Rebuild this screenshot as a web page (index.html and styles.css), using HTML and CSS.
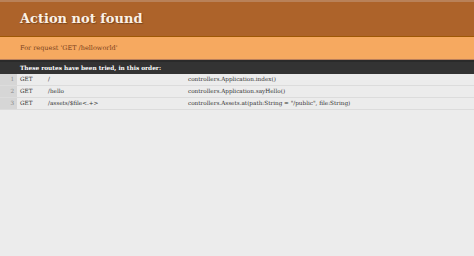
FILE: index.html
```html
<!DOCTYPE html>
<html lang="en">
<head>
    <meta charset="UTF-8">
    <title>Action not found</title>
    <link rel="stylesheet" href="styles.css">
</head>
<body>
    <h1>Action not found</h1>
    <p class="detail">For request 'GET /helloworld'</p>
    <h2>These routes have been tried, in this order:</h2>
    <div class="routes">
        <div class="route">
            <span class="line">1</span>
            <span class="verb">GET</span>
            <span class="path">/</span>
            <span class="call">controllers.Application.index()</span>
        </div>
        <div class="route">
            <span class="line">2</span>
            <span class="verb">GET</span>
            <span class="path">/hello</span>
            <span class="call">controllers.Application.sayHello()</span>
        </div>
        <div class="route">
            <span class="line">3</span>
            <span class="verb">GET</span>
            <span class="path">/assets/$file&lt;.+&gt;</span>
            <span class="call">controllers.Assets.at(path:String = "/public", file:String)</span>
        </div>
    </div>
</body>
</html>
```

FILE: styles.css
```css
html, body {
    margin: 0;
    padding: 0;
    background: #ececec;
    font-family: "DejaVu Serif", serif;
}
h1 {
    margin: 0;
    height: 34px;
    line-height: 34px;
    padding: 0 20px;
    background: #ad632a;
    border-top: 2px solid #b98158;
    border-bottom: 1px solid #9f5805;
    color: #fbf1e6;
    font-size: 13px;
    text-shadow: 1px 1px 1px rgba(0, 0, 0, 0.3);
}
.detail {
    margin: 0;
    height: 22px;
    line-height: 22px;
    padding: 0 20px;
    background: #f6a960;
    border-bottom: 1px solid #ba7f5b;
    color: #7a3f1c;
    font-size: 6.5px;
}
h2 {
    margin: 0;
    height: 12px;
    line-height: 12px;
    padding: 0 20px;
    background: #333;
    border-top: 2px solid #2a2a2a;
    color: #fff;
    font-size: 5.8px;
}
.route {
    display: flex;
    height: 11px;
    line-height: 11px;
    border-bottom: 1px solid #dcdcdc;
    font-size: 5.7px;
    color: #333;
}
.line {
    width: 14px;
    padding-right: 3px;
    background: #d6d6d6;
    color: #8b8b8b;
    text-align: right;
}
.verb {
    width: 28px;
    margin-left: 3px;
}
.path {
    width: 140px;
}
```
